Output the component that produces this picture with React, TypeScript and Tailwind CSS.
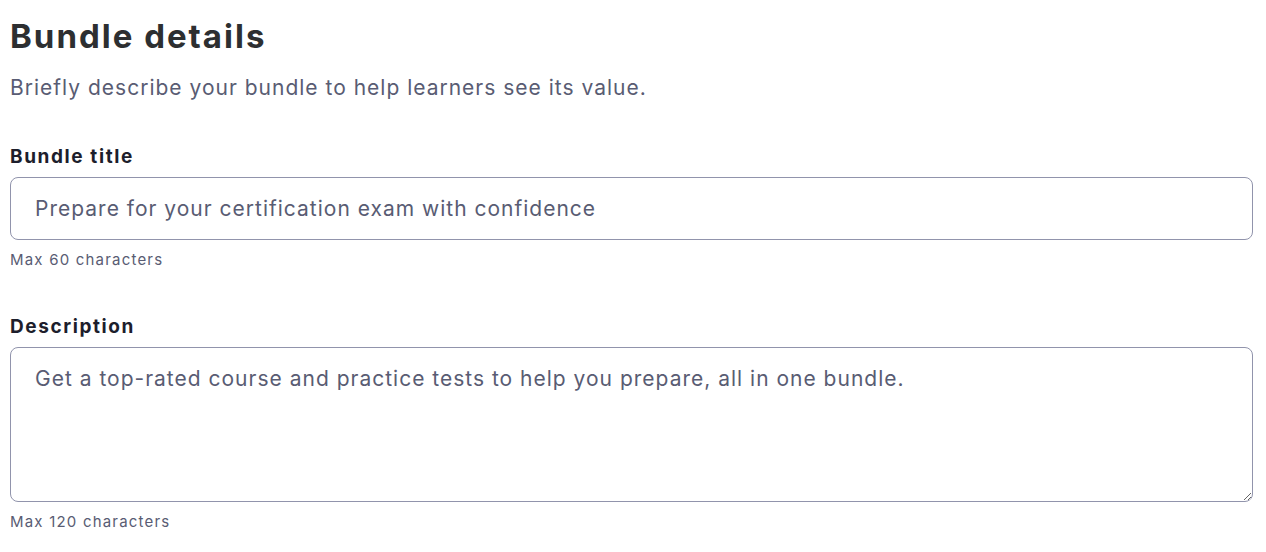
import React from 'react';

const fieldClass =
  'block w-full rounded-lg border border-[#9194ac] bg-white px-6 text-[21px] leading-7 tracking-[1px] text-[#595c73] outline-none';

export default function App() {
  return (
    <div className="min-h-screen bg-white pl-[10px] pr-[13px] pt-4 font-['Inter',sans-serif]">
      <h1 className="text-[33px] font-bold leading-10 tracking-[2px] text-[#2d2f31]">Bundle details</h1>
      <p className="mt-[18px] text-[21px] leading-7 tracking-[1px] text-[#595c73]">
        Briefly describe your bundle to help learners see its value.
      </p>

      {/* Bundle title */}
      <div className="mt-[43px]">
        <label className="block text-[19px] font-bold leading-6 tracking-[1.6px] text-[#1d1e2c]">
          Bundle title
        </label>
        <input
          type="text"
          defaultValue="Prepare for your certification exam with confidence"
          className={`${fieldClass} mt-2 h-[63px] py-4`}
        />
        <div className="mt-[10px] text-[15px] leading-5 tracking-[1.2px] text-[#595c73]">Max 60 characters</div>
      </div>

      {/* Description */}
      <div className="mt-[45px]">
        <label className="block text-[19px] font-bold leading-6 tracking-[1.6px] text-[#1d1e2c]">
          Description
        </label>
        <textarea
          defaultValue="Get a top-rated course and practice tests to help you prepare, all in one bundle."
          className={`${fieldClass} mt-2 h-[155px] resize-y pb-4 pt-[17px]`}
        />
        <div className="mt-[10px] text-[15px] leading-5 tracking-[1.2px] text-[#595c73]">Max 120 characters</div>
      </div>
    </div>
  );
}
